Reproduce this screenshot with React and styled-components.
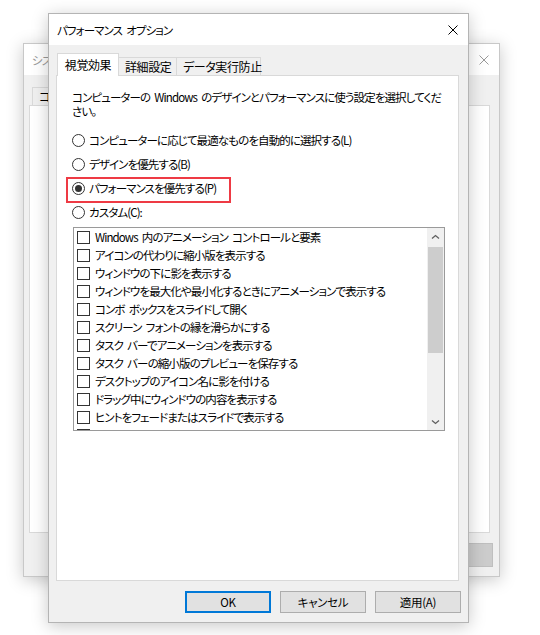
import styled, { createGlobalStyle } from "styled-components";

const GlobalStyle = createGlobalStyle`
  html, body {
    margin: 0;
    padding: 0;
    background: #fff;
  }
  body {
    font-family: "Noto Sans CJK JP", "Noto Sans", sans-serif;
    font-size: 11.5px;
    letter-spacing: -0.9px;
    word-spacing: 2.5px;
    font-feature-settings: "palt";
    color: #000;
  }
`;

const Desktop = styled.div`
  position: relative;
  width: 540px;
  height: 635px;
  overflow: hidden;
  background: #fff;
`;

const Window = styled.div`
  position: absolute;
  left: ${(p) => p.$x}px;
  top: ${(p) => p.$y}px;
  width: ${(p) => p.$w}px;
  height: ${(p) => p.$h}px;
  box-sizing: border-box;
  display: flex;
  flex-direction: column;
  background: #f0f0f0;
  border: 1px solid ${(p) => (p.$active ? "#b4b4b4" : "#c8c8c8")};
  box-shadow: 0 3px 16px rgba(0, 0, 0, 0.22);
`;

const TitleBar = styled.div`
  height: 31px;
  flex: none;
  display: flex;
  align-items: center;
  justify-content: space-between;
  padding-left: 8px;
  background: #fff;
  color: ${(p) => (p.$active ? "#000" : "#9a9a9a")};
`;

const CloseButton = styled.div`
  width: 30px;
  height: 31px;
  display: grid;
  place-items: center;
  color: ${(p) => (p.$active ? "#000" : "#9a9a9a")};
`;

const Body = styled.div`
  flex: 1;
  display: flex;
  flex-direction: column;
  padding: ${(p) => p.$pad};
  min-height: 0;
`;

const TabBar = styled.div`
  display: flex;
  align-items: flex-end;
  height: ${(p) => p.$h}px;
  padding-left: ${(p) => p.$indent}px;
  flex: none;
`;

const Tab = styled.div`
  box-sizing: border-box;
  width: ${(p) => (p.$w ? `${p.$w}px` : "auto")};
  height: ${(p) => (p.$selected ? 23 : 19)}px;
  margin-bottom: -1px;
  padding: ${(p) => (p.$selected ? "3px 0 0" : "1px 6px 0")};
  border: 1px solid #d9d9d9;
  border-bottom: ${(p) => (p.$selected ? "none" : "1px solid #d9d9d9")};
  border-left: ${(p) => (p.$first || p.$selected ? "1px solid #d9d9d9" : "none")};
  background: ${(p) => (p.$selected ? "#fff" : "#f0f0f0")};
  position: relative;
  z-index: ${(p) => (p.$selected ? 1 : 0)};
  font-size: 12px;
  letter-spacing: -0.4px;
  line-height: 16px;
  text-align: center;
  white-space: nowrap;
`;

const Panel = styled.div`
  flex: 1;
  min-height: 0;
  box-sizing: border-box;
  background: #fff;
  border: 1px solid #d9d9d9;
  padding: ${(p) => p.$pad || "0"};
  display: flex;
  flex-direction: column;
`;

const Description = styled.p`
  margin: 0;
  line-height: 14px;
  white-space: nowrap;
`;

const RadioGroup = styled.div`
  margin-top: 10px;
  display: flex;
  flex-direction: column;
  align-items: flex-start;
`;

const RadioRow = styled.label`
  position: relative;
  display: flex;
  align-items: center;
  gap: 4px;
  height: 24px;
  white-space: nowrap;

  ${(p) =>
    p.$marked &&
    `
    &::after {
      content: "";
      position: absolute;
      left: -6px;
      right: -15px;
      top: 1px;
      bottom: -3px;
      border: 2px solid #ee3a44;
    }
  `}
`;

const RadioCircle = styled.span`
  width: 13px;
  height: 13px;
  box-sizing: border-box;
  border: 1px solid #333;
  border-radius: 50%;
  background: #fff;
  display: grid;
  place-items: center;

  &::before {
    content: "";
    width: 7px;
    height: 7px;
    border-radius: 50%;
    background: ${(p) => (p.$checked ? "#333" : "transparent")};
  }
`;

const ListBox = styled.div`
  margin: 3px 0 0 1px;
  width: 372px;
  height: 204px;
  box-sizing: border-box;
  border: 1px solid #9a9a9a;
  background: #fff;
  display: flex;
`;

const ListItems = styled.div`
  flex: 1;
  overflow: hidden;
  padding-left: 3px;
`;

const CheckRow = styled.div`
  height: 18px;
  display: flex;
  align-items: center;
  gap: 5px;
  white-space: nowrap;
`;

const CheckBox = styled.span`
  width: 13px;
  height: 13px;
  flex: none;
  box-sizing: border-box;
  border: 1px solid #333;
  background: #fff;
`;

const ScrollBar = styled.div`
  width: 17px;
  flex: none;
  background: #f0f0f0;
  display: flex;
  flex-direction: column;
`;

const ScrollArrow = styled.div`
  height: 17px;
  flex: none;
  display: grid;
  place-items: center;
  color: #606060;
`;

const ScrollTrack = styled.div`
  flex: 1;
  padding: 2px 1px 0;
`;

const ScrollThumb = styled.div`
  height: 106px;
  background: #cdcdcd;
`;

const Footer = styled.div`
  flex: none;
  display: flex;
  justify-content: flex-end;
  gap: 9px;
  margin-top: 10px;
  margin-right: ${(p) => p.$pull || 0}px;
`;

const Button = styled.div`
  width: ${(p) => p.$w || 86}px;
  height: ${(p) => p.$h || 22}px;
  box-sizing: border-box;
  display: grid;
  place-items: center;
  background: ${(p) => (p.$disabled ? "#cccccc" : "#e1e1e1")};
  border: ${(p) =>
    p.$primary ? "2px solid #0078d7" : p.$disabled ? "1px solid #bfbfbf" : "1px solid #adadad"};
  color: #000;
  letter-spacing: -0.3px;
`;

const CloseIcon = () => (
  <svg width="10" height="10" viewBox="0 0 10 10">
    <path d="M0.5 0.5L9.5 9.5M9.5 0.5L0.5 9.5" stroke="currentColor" strokeWidth="1" />
  </svg>
);

const Chevron = ({ down }) => (
  <svg width="9" height="6" viewBox="0 0 9 6">
    <path
      d={down ? "M1 1.5L4.5 4.5L8 1.5" : "M1 4.5L4.5 1.5L8 4.5"}
      stroke="currentColor"
      strokeWidth="1.3"
      fill="none"
    />
  </svg>
);

const options = [
  { label: "コンピューターに応じて最適なものを自動的に選択する(L)" },
  { label: "デザインを優先する(B)" },
  { label: "パフォーマンスを優先する(P)", checked: true, marked: true },
  { label: "カスタム(C):" },
];

const effects = [
  "Windows 内のアニメーション コントロールと要素",
  "アイコンの代わりに縮小版を表示する",
  "ウィンドウの下に影を表示する",
  "ウィンドウを最大化や最小化するときにアニメーションで表示する",
  "コンボ ボックスをスライドして開く",
  "スクリーン フォントの縁を滑らかにする",
  "タスク バーでアニメーションを表示する",
  "タスク バーの縮小版のプレビューを保存する",
  "デスクトップのアイコン名に影を付ける",
  "ドラッグ中にウィンドウの内容を表示する",
  "ヒントをフェードまたはスライドで表示する",
  "ピークを有効にする",
];

export default function App() {
  return (
    <Desktop>
      <GlobalStyle />

      {/* システムのプロパティ (behind) */}
      <Window $x={23} $y={43} $w={477} $h={534}>
        <TitleBar>
          <span>システムのプロパティ</span>
          <CloseButton>
            <CloseIcon />
          </CloseButton>
        </TitleBar>
        <Body $pad="10px 9px 9px 5px">
          <TabBar $h={20} $indent={3}>
            <Tab $first>コンピューター名</Tab>
          </TabBar>
          <Panel />
          <Footer $pull={-3}>
            <Button $w={100} $h={24} $disabled>
              適用(A)
            </Button>
          </Footer>
        </Body>
      </Window>

      {/* パフォーマンス オプション */}
      <Window $x={48} $y={13} $w={421} $h={610} $active>
        <TitleBar $active>
          <span>パフォーマンス オプション</span>
          <CloseButton $active>
            <CloseIcon />
          </CloseButton>
        </TitleBar>
        <Body $pad="8px 9px 9px 7px">
          <TabBar $h={22} $indent={1}>
            <Tab $selected $w={62}>
              視覚効果
            </Tab>
            <Tab $w={58}>詳細設定</Tab>
            <Tab $w={84}>データ実行防止</Tab>
          </TabBar>
          <Panel $pad="14px 15px">
            <Description>
              コンピューターの Windows のデザインとパフォーマンスに使う設定を選択してくだ
              <br />
              さい。
            </Description>
            <RadioGroup>
              {options.map((o) => (
                <RadioRow key={o.label} $marked={o.marked}>
                  <RadioCircle $checked={o.checked} />
                  {o.label}
                </RadioRow>
              ))}
            </RadioGroup>
            <ListBox>
              <ListItems>
                {effects.map((e) => (
                  <CheckRow key={e}>
                    <CheckBox />
                    {e}
                  </CheckRow>
                ))}
              </ListItems>
              <ScrollBar>
                <ScrollArrow>
                  <Chevron />
                </ScrollArrow>
                <ScrollTrack>
                  <ScrollThumb />
                </ScrollTrack>
                <ScrollArrow>
                  <Chevron down />
                </ScrollArrow>
              </ScrollBar>
            </ListBox>
          </Panel>
          <Footer $pull={-2}>
            <Button $primary>OK</Button>
            <Button>キャンセル</Button>
            <Button>適用(A)</Button>
          </Footer>
        </Body>
      </Window>
    </Desktop>
  );
}
